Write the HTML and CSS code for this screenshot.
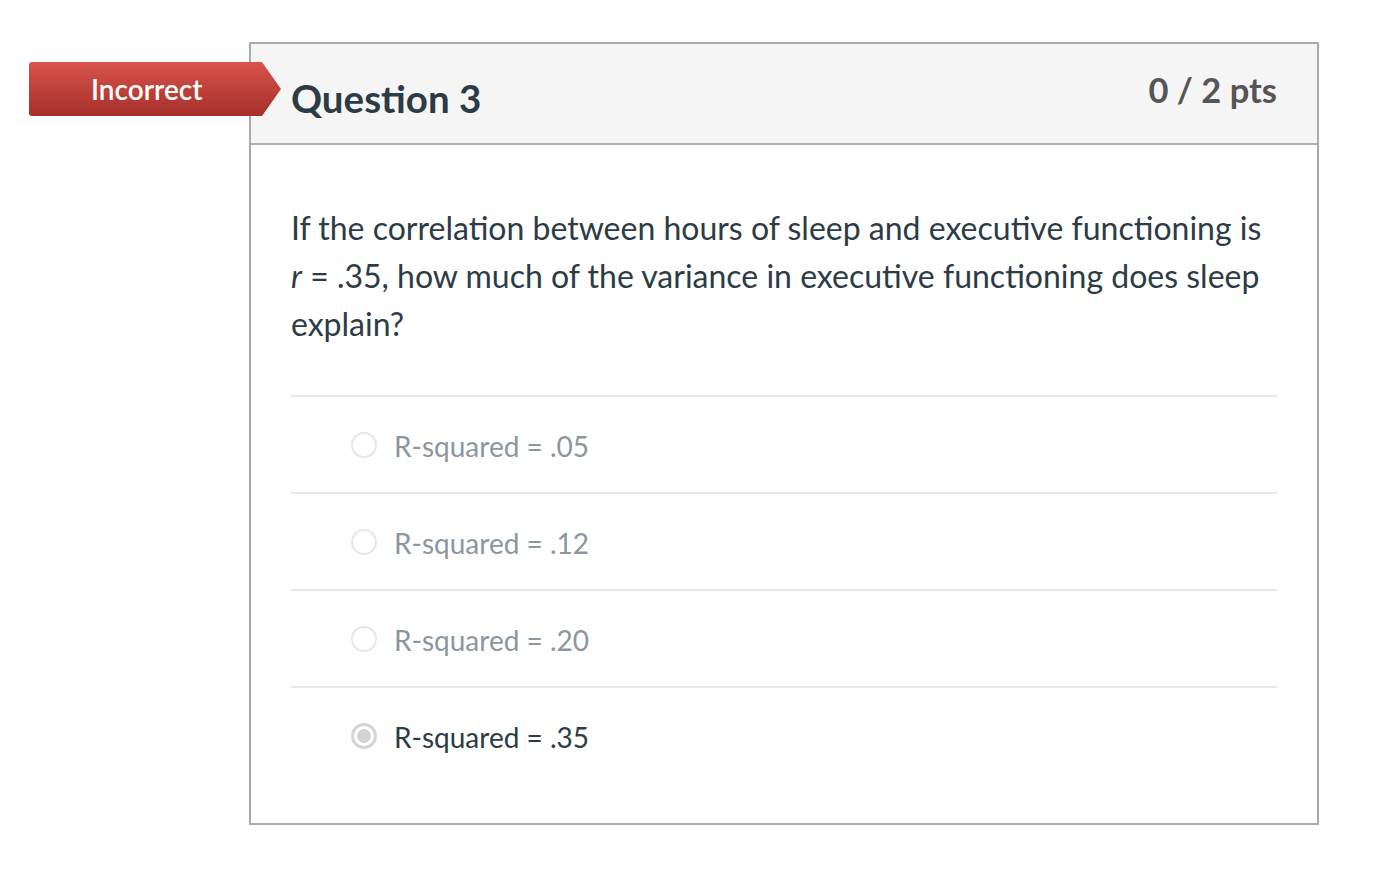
FILE: index.html
```html
<!DOCTYPE html>
<html>
<head>
<meta charset="utf-8">
<link rel="stylesheet" href="styles.css">
</head>
<body>
<div class="page">
  <div class="card">
    <div class="badge">Incorrect</div>
    <div class="card-header">
      <h2 class="title">Question 3</h2>
      <div class="pts">0 / 2 pts</div>
    </div>
    <div class="card-body">
      <p class="question">If the correlation between hours of sleep and executive functioning is <span class="nw"><i>r</i> = .35,</span> how much of the variance in executive functioning does sleep explain?</p>
      <div class="answers">
        <div class="answer"><span class="radio"></span><span class="label">R-squared = .05</span></div>
        <div class="answer"><span class="radio"></span><span class="label">R-squared = .12</span></div>
        <div class="answer"><span class="radio"></span><span class="label">R-squared = .20</span></div>
        <div class="answer selected"><span class="radio"></span><span class="label">R-squared = .35</span></div>
      </div>
    </div>
  </div>
</div>
</body>
</html>
```
FILE: styles.css
```css
* { box-sizing: border-box; }
body { margin: 0; background: #fff; font-family: Lato, "Open Sans", sans-serif; color: #2d3b45; }
.page { padding: 42px 0 0 249px; }
.card { position: relative; width: 1070px; border: 2px solid #aaaaaa; }
.badge {
  position: absolute; left: -222px; top: 18px;
  width: 252px; height: 54px;
  background: linear-gradient(#d8544c, #a52f2a);
  clip-path: polygon(0 0, 233px 0, 252px 50%, 233px 100%, 0 100%);
  border-radius: 3px;
  color: #fff; font-size: 28px; font-weight: 600;
  display: flex; align-items: center; padding-left: 62px;
}
.card-header {
  background: #f5f5f5; border-bottom: 2px solid #b0b0b0;
  height: 101px; display: flex; justify-content: space-between;
  padding: 0 40px;
}
.title { margin: 0; font-size: 38.5px; font-weight: 700; padding-top: 30px; line-height: 48px; }
.pts { font-size: 34.5px; font-weight: 700; color: #555; padding-top: 22px; line-height: 48px; }
.card-body { padding: 59px 40px 40px 40px; }
.question { margin: 0 0 47px 0; font-size: 32px; line-height: 48px; }
.nw { white-space: nowrap; }
.answer {
  border-top: 2px solid #e8e8e8; height: 97px;
  display: flex; align-items: center; padding-left: 60px;
}
.radio { width: 26px; height: 26px; border-radius: 50%; border: 2px solid #e6e6e6; background: #fff; margin-right: 17px; position: relative; }
.label { font-size: 28px; color: #8b969e; position: relative; top: 1px; }
.selected .label { color: #2d3b45; }
.selected .radio { border: 3px solid #d6d6d6; }
.selected .radio::after { content: ""; position: absolute; left: 3px; top: 3px; width: 14px; height: 14px; border-radius: 50%; background: #d4d4d4; }
```
